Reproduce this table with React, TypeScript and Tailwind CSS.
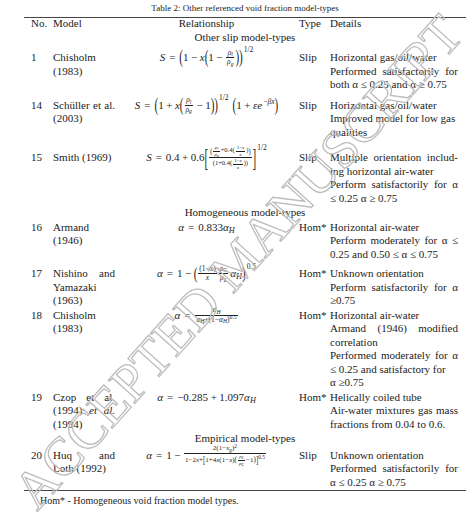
import React from "react";

type N = React.ReactNode;
// a line is either plain (string / node) or justified (array of words)
type Ln = N | N[];

const COLS = "grid grid-cols-[29px_70px_167px_40px_136px]";

function Fr({ n, d, s = "text-[7.5px] leading-[8.5px]" }: { n: N; d: N; s?: string }) {
  return (
    <span className={`mx-[1px] inline-flex flex-col items-center align-middle not-italic ${s}`}>
      <span className="whitespace-nowrap px-[1px]">{n}</span>
      <span className="self-stretch whitespace-nowrap border-t-[0.75px] border-[#222] px-[1px] text-center">{d}</span>
    </span>
  );
}

// stretched delimiter
function B({ c, s = "scale-y-[1.7]" }: { c: string; s?: string }) {
  return <span className={`inline-block leading-none not-italic ${s}`}>{c}</span>;
}

function Ex({ c, s = "-top-[8px]" }: { c: N; s?: string }) {
  return <span className={`relative ml-[1px] text-[7.5px] leading-none ${s}`}>{c}</span>;
}

const Eq = () => <span className="mx-[4px]">=</span>;
const Op = ({ c }: { c: string }) => <span className="mx-[2.5px]">{c}</span>;
const M = ({ children }: { children: N }) => (
  <span className="inline-flex items-center whitespace-nowrap">{children}</span>
);

const rho = (s: string) => (
  <span>
    <i>ρ</i>
    <sub>
      <i>{s}</i>
    </sub>
  </span>
);
const aH = (
  <span>
    <i>α</i>
    <sub>
      <i>H</i>
    </sub>
  </span>
);
const omx = (
  <>
    1−<i>x</i>
  </>
);

function L({ l }: { l: Ln }) {
  if (Array.isArray(l))
    return (
      <div className="flex justify-between whitespace-nowrap">
        {l.map((w, i) => (
          <span key={i}>{w}</span>
        ))}
      </div>
    );
  return <div className="whitespace-nowrap">{l}</div>;
}

function Row({ no, model, rel, type, det, pt }: { no: string; model: Ln[]; rel: N; type: string; det: Ln[]; pt: string }) {
  return (
    <div className={`${COLS} ${pt}`}>
      <div className="pl-[7px]">{no}</div>
      <div className="w-[62px]">
        {model.map((l, i) => (
          <L key={i} l={l} />
        ))}
      </div>
      <div className="flex h-[13.5px] items-center justify-center">{rel}</div>
      <div className="pl-[9px]">{type}</div>
      <div className="w-[128px]">
        {det.map((l, i) => (
          <L key={i} l={l} />
        ))}
      </div>
    </div>
  );
}

function Section({ title, pt }: { title: string; pt: string }) {
  return <div className={`text-center ${pt}`}>{title}</div>;
}

export default function App() {
  return (
    <div className="relative h-[524px] w-[474px] overflow-hidden bg-white text-[#1c1c1c] [font-family:'Liberation_Serif',serif]">
      <div className="ml-[24px] w-[442px]">
        <div className="pt-[2px] text-center text-[9px] leading-[12px]">
          Table 2: Other referenced void fraction model-types
        </div>
        <div className="mt-[3px] h-px bg-[#444]" />

        <div className="text-[11px] leading-[13.5px]">
          <div className={`${COLS} -mt-[1px]`}>
            <div className="pl-[7px]">No.</div>
            <div>Model</div>
            <div className="text-center">Relationship</div>
            <div className="pl-[9px]">Type</div>
            <div>Details</div>
          </div>

          <Section title="Other slip model-types" pt="pt-0" />

          <Row
            pt="pt-[7px]"
            no="1"
            model={["Chisholm", "(1983)"]}
            rel={
              <M>
                <i>S</i>
                <Eq />
                <B c="(" />1<Op c="−" />
                <i>x</i>
                <B c="(" />1<Op c="−" />
                <Fr n={rho("l")} d={rho("g")} />
                <B c=")" />
                <B c=")" />
                <Ex c="1/2" />
              </M>
            }
            type="Slip"
            det={[
              "Horizontal gas/oil/water",
              ["Performed", "satisfactorily", "for"],
              "both α ≤ 0.25 and α ≥ 0.75",
            ]}
          />

          <Row
            pt="pt-[7px]"
            no="14"
            model={[["Schüller", "et", "al."], "(2003)"]}
            rel={
              <M>
                <i>S</i>
                <Eq />
                <B c="(" />1<Op c="+" />
                <i>x</i>
                <B c="(" />
                <Fr n={rho("l")} d={rho("g")} />
                <Op c="−" />1<B c=")" />
                <B c=")" />
                <Ex c="1/2" />
                <span className="w-[4px]" />
                <B c="(" />1<Op c="+" />
                <i>εe</i>
                <Ex
                  c={
                    <>
                      −<i>βx</i>
                    </>
                  }
                  s="-top-[4px]"
                />
                <B c=")" />
              </M>
            }
            type="Slip"
            det={["Horizontal gas/oil/water", "Improved model for low gas", "qualities"]}
          />

          <Row
            pt="pt-[12px]"
            no="15"
            model={["Smith (1969)"]}
            rel={
              <M>
                <i>S</i>
                <Eq />
                0.4
                <Op c="+" />
                0.6
                <B c="[" s="scale-y-[2.3]" />
                <Fr
                  s="text-[6.5px] leading-[9px]"
                  n={
                    <>
                      <B c="(" s="scale-y-[1.3]" />
                      <Fr s="text-[5px] leading-[5.5px]" n={rho("l")} d={rho("g")} />
                      +0.4(
                      <Fr s="text-[5px] leading-[5.5px]" n={omx} d={<i>x</i>} />)
                      <B c=")" s="scale-y-[1.3]" />
                    </>
                  }
                  d={
                    <>
                      (1+0.4(
                      <Fr s="text-[5px] leading-[5.5px]" n={omx} d={<i>x</i>} />
                      ))
                    </>
                  }
                />
                <B c="]" s="scale-y-[2.3]" />
                <Ex c="1/2" s="-top-[10px]" />
              </M>
            }
            type="Slip"
            det={[
              ["Multiple", "orientation", "includ-"],
              "ing horizontal air-water",
              ["Perform", "satisfactorily", "for", "α"],
              "≤ 0.25 α ≥ 0.75",
            ]}
          />

          <Section title="Homogeneous model-types" pt="pt-[1px]" />

          <Row
            pt="pt-[1px]"
            no="16"
            model={["Armand", "(1946)"]}
            rel={
              <M>
                <i>α</i>
                <Eq />
                0.833{aH}
              </M>
            }
            type="Hom*"
            det={["Horizontal air-water", ["Perform", "moderately", "for", "α", "≤"], "0.25 and 0.50 ≤ α ≤ 0.75"]}
          />

          <Row
            pt="pt-[6px]"
            no="17"
            model={[["Nishino", "and"], "Yamazaki", "(1963)"]}
            rel={
              <M>
                <i>α</i>
                <Eq />1<Op c="−" />
                <B c="(" s="scale-y-[1.5]" />
                <Fr n={<>({omx})</>} d={<i>x</i>} />
                <Fr n={rho("G")} d={rho("L")} />
                <span className="ml-[1px]">{aH}</span>
                <B c=")" s="scale-y-[1.5]" />
                <Ex c="0.5" s="-top-[7px]" />
              </M>
            }
            type="Hom*"
            det={["Unknown orientation", ["Perform", "satisfactorily", "for", "α"], "≥0.75"]}
          />

          <Row
            pt="pt-[1px]"
            no="18"
            model={["Chisholm", "(1983)"]}
            rel={
              <M>
                <i>α</i>
                <Eq />
                <Fr
                  n={aH}
                  d={
                    <>
                      {aH}+(1−{aH})<sup>0.5</sup>
                    </>
                  }
                />
              </M>
            }
            type="Hom*"
            det={[
              "Horizontal air-water",
              ["Armand", "(1946)", "modified"],
              "correlation",
              ["Performed", "moderately", "for", "α"],
              "≤ 0.25 and satisfactory for",
              "α ≥0.75",
            ]}
          />

          <Row
            pt="pt-[1px]"
            no="19"
            model={[["Czop", "et", "al."], ["(1994)", <i>et</i>, <i>al.</i>], "(1994)"]}
            rel={
              <M>
                <i>α</i>
                <Eq />
                −0.285
                <Op c="+" />
                1.097{aH}
              </M>
            }
            type="Hom*"
            det={["Helically coiled tube", ["Air-water", "mixtures", "gas", "mass"], "fractions from 0.04 to 0.6."]}
          />

          <Section title="Empirical model-types" pt="pt-[1px]" />

          <Row
            pt="pt-[3px]"
            no="20"
            model={[["Huq", "and"], "Loth (1992)"]}
            rel={
              <M>
                <i>α</i>
                <Eq />1<Op c="−" />
                <Fr
                  s="text-[7px] leading-[9px]"
                  n={
                    <>
                      2(1−<i>x</i>
                      <sub>
                        <i>g</i>
                      </sub>
                      )<sup>2</sup>
                    </>
                  }
                  d={
                    <>
                      1−2<i>x</i>+<B c="[" s="scale-y-[1.5]" />
                      1+4<i>x</i>({omx})<B c="(" s="scale-y-[1.3]" />
                      <Fr s="text-[5px] leading-[5.5px]" n={rho("L")} d={rho("G")} />
                      −1
                      <B c=")" s="scale-y-[1.3]" />
                      <B c="]" s="scale-y-[1.5]" />
                      <sup>0.5</sup>
                    </>
                  }
                />
              </M>
            }
            type="Slip"
            det={["Unknown orientation", ["Performed", "satisfactorily", "for"], "α ≤ 0.25 α ≥ 0.75"]}
          />

          <div className="mt-[1px] h-px bg-[#444]" />
          <div className="mt-[3px] pl-[16px] text-[10px] leading-[13px]">Hom* - Homogeneous void fraction model types.</div>
        </div>
      </div>

      <div className="pointer-events-none absolute left-[238px] top-[262px] -translate-x-1/2 -translate-y-1/2 -rotate-[48deg] whitespace-nowrap text-[54px] leading-none text-transparent [-webkit-text-stroke:1.3px_#bdbdbd]">
        ACCEPTED MANUSCRIPT
      </div>
    </div>
  );
}
